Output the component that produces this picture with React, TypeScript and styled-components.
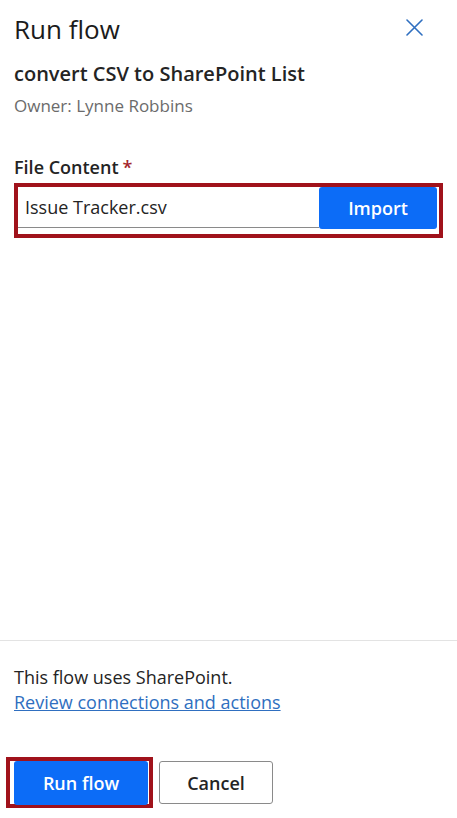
import styled, { createGlobalStyle } from "styled-components";

const GlobalStyle = createGlobalStyle`
  html, body {
    margin: 0;
    padding: 0;
    background: #ffffff;
  }
  body {
    font-family: "Open Sans", "Noto Sans", sans-serif;
    color: #242424;
  }
`;

const Panel = styled.div`
  height: 818px;
  display: flex;
  flex-direction: column;
  box-sizing: border-box;
`;

const Body = styled.div`
  flex: 1;
  padding: 12px 14px 0 14px;
`;

const Header = styled.div`
  display: flex;
  align-items: center;
  justify-content: space-between;
`;

const Title = styled.h1`
  margin: 0;
  font-size: 26px;
  line-height: 34px;
  font-weight: 400;
  color: #1b1b1b;
`;

const CloseButton = styled.button`
  border: none;
  background: none;
  padding: 0;
  width: 24px;
  height: 24px;
  margin: 0 17px 3px 0;
  display: flex;
  align-items: center;
  justify-content: center;
  cursor: pointer;
`;

const FlowName = styled.h2`
  margin: 14px 0 0 0;
  font-size: 20px;
  line-height: 28px;
  font-weight: 600;
  color: #242424;
`;

const Owner = styled.div`
  margin-top: 6px;
  font-size: 17px;
  line-height: 24px;
  color: #6b6b6b;
`;

const FieldLabel = styled.label`
  display: block;
  margin-top: 37px;
  font-size: 18px;
  line-height: 24px;
  font-weight: 600;
  color: #242424;
`;

const Required = styled.span`
  color: #a4262c;
  margin-left: 4px;
`;

const Highlight = styled.div<{ $offset?: number }>`
  display: flex;
  border: 4px solid #a0121b;
  margin-left: ${(p) => p.$offset ?? 0}px;
`;

const FieldRow = styled(Highlight)`
  margin-top: 4px;
  padding: 0 2px 5px 0;
  align-items: flex-start;
`;

const TextInput = styled.input`
  flex: 1;
  min-width: 0;
  height: 41px;
  box-sizing: border-box;
  border: none;
  border-bottom: 1px solid #8a8a8a;
  padding: 0 7px;
  font-family: inherit;
  font-size: 18px;
  color: #242424;
  background: #fff;
  outline: none;
`;

const PrimaryButton = styled.button<{ $width: number }>`
  width: ${(p) => p.$width}px;
  height: 42px;
  border: none;
  border-radius: 3px;
  background: #0c6cf7;
  color: #ffffff;
  font-family: inherit;
  font-size: 18px;
  font-weight: 600;
  cursor: pointer;
`;

const Footer = styled.div`
  border-top: 1px solid #e3e3e3;
  padding: 24px 14px 10px 14px;
`;

const Notice = styled.div`
  font-size: 18px;
  line-height: 25px;
  color: #242424;
`;

const ReviewLink = styled.a`
  font-size: 18px;
  line-height: 25px;
  color: #2f6fc0;
  text-decoration: underline;
`;

const Actions = styled.div`
  display: flex;
  align-items: center;
  gap: 6px;
  margin-top: 42px;
`;

const RunWrap = styled(Highlight)`
  padding: 0 1px 0 4px;
  align-items: center;
  height: 51px;
  box-sizing: border-box;
`;

const SecondaryButton = styled.button`
  width: 114px;
  height: 43px;
  border: 1px solid #8a8a8a;
  border-radius: 3px;
  background: #ffffff;
  color: #242424;
  font-family: inherit;
  font-size: 18px;
  font-weight: 600;
  cursor: pointer;
`;

function App() {
  return (
    <>
      <GlobalStyle />
      <Panel>
        <Body>
          <Header>
            <Title>Run flow</Title>
            <CloseButton aria-label="Close">
              <svg width="17" height="17" viewBox="0 0 17 17">
                <path
                  d="M1 1 L16 16 M16 1 L1 16"
                  stroke="#2f6fc0"
                  strokeWidth="1.6"
                  strokeLinecap="round"
                />
              </svg>
            </CloseButton>
          </Header>
          <FlowName>convert CSV to SharePoint List</FlowName>
          <Owner>Owner: Lynne Robbins</Owner>

          <FieldLabel>
            File Content<Required>*</Required>
          </FieldLabel>
          <FieldRow>
            <TextInput defaultValue="Issue Tracker.csv" />
            <PrimaryButton $width={118}>Import</PrimaryButton>
          </FieldRow>
        </Body>

        <Footer>
          <Notice>This flow uses SharePoint.</Notice>
          <ReviewLink href="#">Review connections and actions</ReviewLink>
          <Actions>
            <RunWrap $offset={-8}>
              <PrimaryButton $width={134} style={{ height: 44 }}>
                Run flow
              </PrimaryButton>
            </RunWrap>
            <SecondaryButton>Cancel</SecondaryButton>
          </Actions>
        </Footer>
      </Panel>
    </>
  );
}

export default App;
